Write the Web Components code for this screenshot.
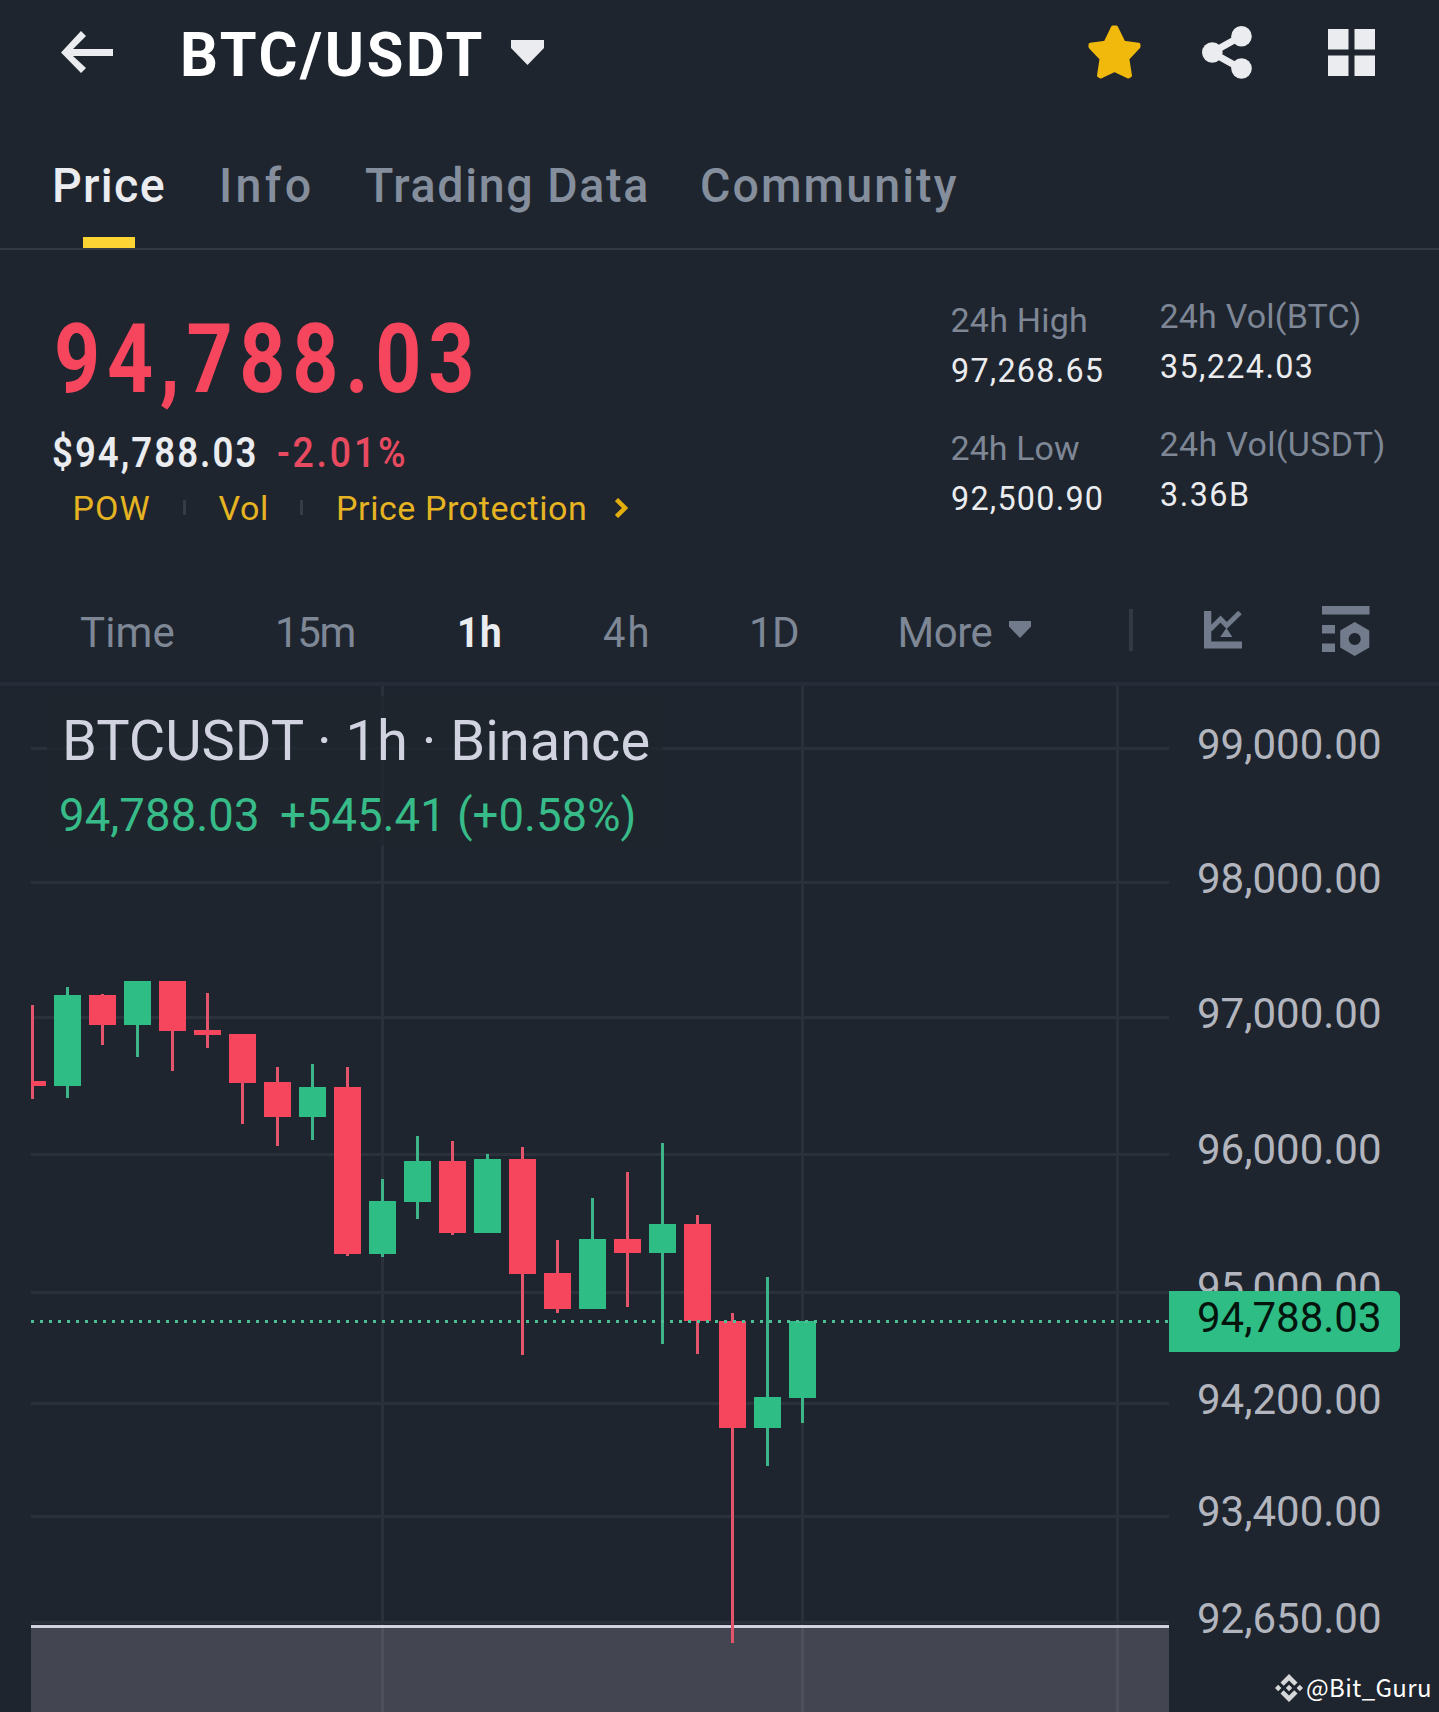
<!doctype html>
<html lang="en">
<head>
  <meta charset="utf-8">
  <meta name="viewport" content="width=device-width, initial-scale=1.0">
  <title>BTC/USDT</title>
  <style>
    body {
      margin: 0;
      background: #1f252e;
      font-family: Roboto, "Liberation Sans", sans-serif;
      color: #eaecef;
      --muted: #848e9c;
      --yellow: #f0b90b;
      --red: #f6465d;
      --green: #2ebd85;
      --line: #323943;
    }
  </style>

  <template id="pair-header">
    <style>
      :host { display: flex; align-items: center; height: 104px; padding: 0 64.500px 0 61px; }
      svg { display: block; flex: none; }
      .title { margin: 6px 0 0 69.500px; }
      .caret { margin-left: 29px; margin-top: 1px; }
      .actions { display: flex; align-items: center; margin-left: auto; }
      .share { margin-left: 61px; }
      .grid { margin-left: 76px; }
    </style>
    <svg width="52" height="42" viewBox="0 0 52 42" fill="#eaecef"><path d="M20 0l5 5-13 13h40v7H12l13 12-5 5L0 21.500z"/></svg>
    <fit-text class="title" w="299" size="62" weight="700" sx="0.96" color="#fff">BTC/USDT</fit-text>
    <svg class="caret" width="33" height="25" viewBox="0 0 33 25" fill="#eaecef"><path d="M0 0h33v8L16.500 25 0 8z"/></svg>
    <div class="actions">
      <svg width="53" height="54" viewBox="0 0 53 54" fill="#f0b90b" stroke="#f0b90b" stroke-width="4" stroke-linejoin="round"><path d="M25 2.500h3l7.500 15.200 15 2v2L39.300 33.500 42 50.500l-1.800 1L26.500 45 12.800 51.500l-1.800-1 2.600-17L2.500 21.800v-2l15-2z"/></svg>
      <svg class="share" width="50" height="53" viewBox="0 0 50 53" fill="#eaecef"><path d="M39.500 10L10 26.500 39.500 43" fill="none" stroke="#eaecef" stroke-width="7"/><circle cx="10.300" cy="26.500" r="10.300"/><circle cx="39.500" cy="10.300" r="10.300"/><circle cx="39.500" cy="42.500" r="10.300"/></svg>
      <svg class="grid" width="47" height="47" viewBox="0 0 47 47" fill="#eaecef"><path d="M0 0h20.500v20.500H0zM26.500 0H47v20.500H26.500zM0 26.500h20.500V47H0zM26.500 26.500H47V47H26.500z"/></svg>
    </div>
  </template>

  <template id="tab-bar">
    <style>
      :host { display: flex; box-sizing: border-box; height: 146px; padding-left: 55px; gap: 56px; border-bottom: 2px solid var(--line); }
    </style>
    <slot></slot>
  </template>

  <template id="tab-item">
    <style>
      :host { display: flex; flex-direction: column; align-items: center; padding-top: 52px; color: var(--muted); }
      :host([active]) { color: #eaecef; }
      .mark { width: 52px; height: 11px; margin: 21px 2px 0 0; }
      :host([active]) .mark { background: #fcd535; }
    </style>
    <slot></slot>
    <div class="mark"></div>
  </template>

  <template id="price-summary">
    <style>
      :host { display: flex; box-sizing: border-box; height: 332px; padding: 45px 55px 0 54px; }
      .left { padding-top: 17px; }
      .row { display: flex; align-items: center; }
      .fiat { margin-top: 21px; gap: 22px; }
      .tags { margin: 10.500px 0 0 20.500px; }
      .sep { width: 3px; height: 15px; background: #353c47; }
      .stats { display: grid; grid-template-columns: 209px 224px; row-gap: 28px; margin-left: auto; align-content: start; }
      .up { margin-top: -4px; }
    </style>
    <div class="left">
      <fit-text style="margin-left:3.500px" w="414" size="97" lh="95" weight="700" sx="0.83" color="var(--red)">94,788.03</fit-text>
      <div class="row fiat">
        <fit-text w="201.500" size="42.500" lh="50" weight="600" sx="0.86">$94,788.03</fit-text>
        <fit-text w="126.500" size="42.500" lh="50" weight="500" sx="0.88" color="#e84a60">-2.01%</fit-text>
      </div>
      <div class="row tags">
        <fit-text w="75" size="34" lh="38" color="#e6b422">POW</fit-text>
        <div class="sep" style="margin:0 33px 0 33px"></div>
        <fit-text w="47.500" size="34" lh="38" color="#e6b422">Vol</fit-text>
        <div class="sep" style="margin:0 35px 0 34px"></div>
        <fit-text w="247" size="34" lh="38" color="#e6b422">Price Protection</fit-text>
        <svg style="margin-left:30px" width="13" height="20" viewBox="0 0 13 20" fill="none" stroke="#e2ae0e" stroke-width="4.500"><path d="M1.500 1.500L10 10l-8.500 8.500"/></svg>
      </div>
    </div>
    <div class="stats">
      <stat-cell label="24h High" lw="134.500" value="97,268.65" vw="150"></stat-cell>
      <stat-cell class="up" label="24h Vol(BTC)" lw="199" value="35,224.03" vw="150"></stat-cell>
      <stat-cell label="24h Low" lw="127.500" value="92,500.90" vw="150"></stat-cell>
      <stat-cell class="up" label="24h Vol(USDT)" lw="223" value="3.36B" vw="87"></stat-cell>
    </div>
  </template>

  <template id="interval-bar">
    <style>
      :host { display: flex; align-items: center; box-sizing: border-box; height: 104px; padding-left: 81px; border-bottom: 4px solid #262c37; color: #7e8796; }
      svg { display: block; flex: none; }
      fit-text { margin-top: 2px; }
      .divider { width: 4px; height: 42px; margin: -4px 0 0 98px; background: #323943; }
    </style>
    <fit-text w="92.500" size="42">Time</fit-text>
    <fit-text style="margin-left:104.500px" w="75.500" size="42">15m</fit-text>
    <fit-text style="margin-left:106px" w="40.500" size="42" weight="700" sx="0.92" color="#eaecef">1h</fit-text>
    <fit-text style="margin-left:103.500px" w="43.500" size="42" sx="0.95">4h</fit-text>
    <fit-text style="margin-left:105px" w="46" size="42">1D</fit-text>
    <fit-text style="margin-left:102.500px" w="91" size="42">More</fit-text>
    <svg style="margin:-6px 0 0 17.500px" width="22" height="17" viewBox="0 0 22 17" fill="#727b8c"><path d="M0 0h22v5.500L11 17 0 5.500z"/></svg>
    <div class="divider"></div>
    <svg style="margin:-5px 0 0 71px" width="38" height="38" viewBox="0 0 38 38" fill="#727b8c"><path d="M0 0h7.300v30.500H38v7H0z"/><path d="M6 18.500L16.500 8l6.200 6.500L36 1.500" fill="none" stroke="#727b8c" stroke-width="5"/><path d="M22.400 17l6 9H16.200z"/></svg>
    <svg style="margin:-2px 0 0 80px" width="48" height="50" viewBox="0 0 48 50" fill="#727b8c"><path d="M0 0h47.500v8.500H0zM0 19h13v8.500H0zM0 37.500h13V46H0z"/><path fill-rule="evenodd" d="M32.700 16l14.600 8.500v17L32.700 50 18.200 41.500v-17zM32.700 27a6 6 0 1 0 .01 0z"/></svg>
  </template>

  <template id="price-chart">
    <style>
      :host { display: block; position: relative; height: 1026px; overflow: hidden; }
      svg { display: block; }
      .legend { position: absolute; left: 47px; top: 10px; width: 602px; height: 150px; padding: 0 0 0 14px; background: #1f252eb8; }
      .name { margin: 15px 0 0 5px; }
      .quote { display: flex; gap: 24px; margin-top: 15px; }
    </style>
    <svg width="1439" height="1026" viewBox="0 686 1439 1026">
      <g id="grid" fill="#2a313b"></g>
      <rect x="31" y="1628" width="1138" height="84" fill="#434651"/>
      <g fill="#fff" fill-opacity=".06">
        <rect x="381" y="1628" width="3" height="84"/><rect x="801" y="1628" width="3" height="84"/><rect x="1116" y="1628" width="3" height="84"/>
      </g>
      <rect x="31" y="1625" width="1138" height="3" fill="#d1d4e0"/>
      <g id="candles"></g>
      <path d="M31 1321.500H1169" stroke="#4fbf97" stroke-width="3" stroke-dasharray="3 6"/>
      <g id="axis" fill="#b2b5be" font-family="Roboto, sans-serif" font-size="42"></g>
      <path d="M1169 1291h225a6 6 0 0 1 6 6v49a6 6 0 0 1-6 6h-225z" fill="#2ebd85"/>
      <text x="1197" y="1331.700" textLength="184.500" font-family="Roboto, sans-serif" font-size="42" fill="#03140d">94,788.03</text>
    </svg>
    <div class="legend">
      <fit-text class="name" w="583.500" size="56" lh="60" color="#d1d3e0">BTCUSDT · 1h · Binance</fit-text>
      <div class="quote">
        <fit-text w="196" size="45.500" lh="60" color="#37bb88">94,788.03</fit-text>
        <fit-text w="352.500" size="45.500" lh="60" color="#37bb88">+545.41 (+0.58%)</fit-text>
      </div>
    </div>
    <slot></slot>
  </template>

  <template id="author-mark">
    <style>
      :host { position: absolute; right: 9px; bottom: 0; display: flex; align-items: center; gap: 4px; height: 48px; }
      fit-text { margin-top: -2px; }
    </style>
    <svg width="28" height="28" viewBox="0 0 28 28" fill="#d6d7d9"><path d="M14 0l8.500 8.500-3.200 3.200L14 6.400l-5.300 5.300-3.200-3.200zM14 28l8.500-8.500-3.200-3.200L14 21.600l-5.300-5.300-3.200 3.200zM14 10.800l3.200 3.200-3.200 3.200-3.200-3.200zM3.200 10.800L6.400 14l-3.200 3.200L0 14zM24.800 10.800L28 14l-3.200 3.200-3.200-3.200z"/></svg>
    <fit-text w="123" size="24" lh="44" family="'Noto Sans CJK SC', 'Noto Sans', sans-serif" color="#fff">@Bit_Guru</fit-text>
  </template>
</head>
<body>
<pair-header></pair-header>
<tab-bar>
  <tab-item active><fit-text w="109" size="48" lh="60" weight="500" sx="0.97">Price</fit-text></tab-item>
  <tab-item style="margin-left:1.500px"><fit-text w="88" size="48" lh="60" weight="500" sx="0.97">Info</fit-text></tab-item>
  <tab-item><fit-text w="280.500" size="48" lh="60" weight="500" sx="0.97">Trading Data</fit-text></tab-item>
  <tab-item><fit-text w="255" size="48" lh="60" weight="500" sx="0.97">Community</fit-text></tab-item>
</tab-bar>
<price-summary></price-summary>
<interval-bar></interval-bar>
<price-chart><author-mark></author-mark></price-chart>

<script>
  const measure = document.createElement('canvas').getContext('2d');

  // One line of text whose ink fills exactly `w` pixels: the rest goes to letter-spacing.
  customElements.define('fit-text', class extends HTMLElement {
    constructor() {
      super();
      this.attachShadow({mode: 'open'});
    }
    connectedCallback() {
      const num = (name, def) => parseFloat(this.getAttribute(name) || def);
      const w = num('w', 100), size = num('size', 16), sx = num('sx', 1);
      const lh = num('lh', Math.round(size * 1.2));
      const weight = this.getAttribute('weight') || 400;
      const family = this.getAttribute('family') || 'Roboto, "Liberation Sans", sans-serif';
      const text = this.textContent;
      measure.font = `${weight} ${size}px ${family}`;
      const m = measure.measureText(text);
      const left = -m.actualBoundingBoxLeft;
      const ink = m.actualBoundingBoxRight + m.actualBoundingBoxLeft;
      const spacing = (w / sx - ink) / (text.length - 1);
      this.shadowRoot.innerHTML = `
        <style>
          :host { display: block; flex: none; width: ${w}px; height: ${lh}px; }
          span {
            display: block; width: max-content; white-space: pre;
            font: ${weight} ${size}px/${lh}px ${family};
            color: ${this.getAttribute('color') || 'inherit'};
            letter-spacing: ${spacing.toFixed(3)}px;
            margin-left: ${(-left * sx).toFixed(2)}px;
            transform: scaleX(${sx}); transform-origin: 0 0;
          }
        </style>
        <span><slot></slot></span>`;
    }
  });

  customElements.define('stat-cell', class extends HTMLElement {
    connectedCallback() {
      const a = name => this.getAttribute(name);
      this.attachShadow({mode: 'open'}).innerHTML = `
        <style>:host { display: block; padding-left: .5px; }</style>
        <fit-text w="${a('lw')}" size="34" lh="50" color="#7e8796">${a('label')}</fit-text>
        <fit-text w="${a('vw')}" size="34" lh="50" sx="0.95" color="#eaecef">${a('value')}</fit-text>`;
    }
  });

  class FromTemplate extends HTMLElement {
    constructor() {
      super();
      const t = document.querySelector('template#' + this.localName);
      this.attachShadow({mode: 'open'}).appendChild(t.content.cloneNode(true));
    }
  }

  ['pair-header', 'tab-bar', 'tab-item', 'price-summary', 'interval-bar', 'author-mark'].forEach(name => {
    customElements.define(name, class extends FromTemplate {});
  });

  // colour, wick top, wick bottom, body top, body bottom
  const CANDLES = [
    ['r', 1005, 1099, 1081, 1086], ['g', 987, 1098, 995, 1086], ['r', 994, 1045, 995, 1025],
    ['g', 981, 1057, 981, 1025], ['r', 981, 1071, 981, 1031], ['r', 993, 1048, 1030, 1035],
    ['r', 1034, 1124, 1034, 1083], ['r', 1067, 1146, 1082, 1117], ['g', 1064, 1140, 1087, 1117],
    ['r', 1067, 1256, 1087, 1254], ['g', 1179, 1257, 1201, 1254], ['g', 1136, 1219, 1161, 1202],
    ['r', 1141, 1235, 1161, 1233], ['g', 1154, 1233, 1159, 1233], ['r', 1147, 1355, 1159, 1274],
    ['r', 1240, 1313, 1273, 1309], ['g', 1198, 1309, 1239, 1309], ['r', 1172, 1307, 1239, 1253],
    ['g', 1143, 1344, 1224, 1253], ['r', 1215, 1354, 1224, 1321], ['r', 1313, 1643, 1321, 1428],
    ['g', 1277, 1466, 1397, 1428], ['g', 1321, 1423, 1321, 1398]
  ];

  // label, grid line y, text baseline
  const TICKS = [
    ['99,000.00', 747, 758.7], ['98,000.00', 881, 893], ['97,000.00', 1016, 1028],
    ['96,000.00', 1153, 1164], ['95,000.00', 1291, 1302], ['94,200.00', 1402, 1414],
    ['93,400.00', 1515, 1525.7], ['92,650.00', 1621, 1633]
  ];

  customElements.define('price-chart', class extends FromTemplate {
    connectedCallback() {
      const $ = id => this.shadowRoot.getElementById(id);
      $('grid').innerHTML =
        TICKS.map(t => `<rect x="31" y="${t[1]}" width="1138" height="3"/>`).join('') +
        [381, 801, 1116].map(x => `<rect x="${x}" y="686" width="3" height="942"/>`).join('');
      $('axis').innerHTML = TICKS.map(t => `<text x="1197" y="${t[2]}" textLength="184.500">${t[0]}</text>`).join('');
      $('candles').innerHTML = CANDLES.map(([c, t, b, bt, bb], i) => {
        const x = 32.5 + i * 35;
        const bx = Math.max(31, x - 13.5);
        const body = c === 'r' ? '#f6465d' : '#2ebd85';
        const wick = c === 'r' ? '#e4546a' : '#3db588';
        return `<rect x="${x - 1.5}" y="${t}" width="3" height="${b - t}" fill="${wick}"/>
          <rect x="${bx}" y="${bt}" width="${x + 13.5 - bx}" height="${bb - bt}" fill="${body}"/>`;
      }).join('');
    }
  });
</script>
</body>
</html>
